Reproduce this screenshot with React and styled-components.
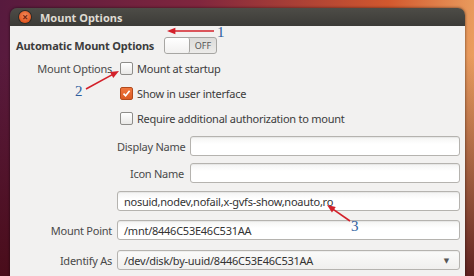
import React from "react";
import styled, { createGlobalStyle } from "styled-components";

const GlobalStyle = createGlobalStyle`
  html, body { margin: 0; padding: 0; }
  body {
    width: 474px;
    height: 276px;
    overflow: hidden;
    background:
      linear-gradient(180deg, rgba(70, 10, 20, 0) 20%, rgba(70, 10, 20, 0.85) 100%),
      linear-gradient(95deg, #571a3e 0%, #80263e 40%, #d2582e 78%, #efad6a 100%);
    font-family: "Noto Sans", "DejaVu Sans", sans-serif;
  }
`;

const Stage = styled.div`
  position: relative;
  width: 474px;
  height: 276px;
  padding: 8px 9px 0 10px;
  box-sizing: border-box;
`;

const Window = styled.div`
  width: 455px;
  height: 268px;
  border-radius: 7px 7px 0 0;
  overflow: hidden;
  box-shadow: 0 0 3px rgba(0, 0, 0, 0.6);
  display: flex;
  flex-direction: column;
`;

const TitleBar = styled.div`
  height: 18px;
  flex: none;
  display: flex;
  align-items: center;
  gap: 9px;
  padding-left: 9px;
  background: linear-gradient(180deg, #4d4c47 0%, #3c3b37 100%);
  color: #dfdbd2;
  font-size: 11px;
  font-weight: bold;
  white-space: nowrap;
`;

const CloseButton = styled.div`
  width: 12px;
  height: 12px;
  border-radius: 50%;
  background: radial-gradient(circle at 50% 40%, #f58d5f 0%, #e2561f 70%, #b9401a 100%);
  box-shadow: 0 0 0 1px #2d2a26;
  color: #6d2410;
  font-size: 10px;
  line-height: 12px;
  text-align: center;
`;

const Body = styled.div`
  flex: 1;
  background: #f2f1f0;
  padding: 11px 5px 0 6px;
  color: #3c3c3c;
  font-size: 11px;
  letter-spacing: -0.25px;
  white-space: nowrap;
`;

const Header = styled.div`
  display: flex;
  align-items: center;
  height: 16px;
`;

const HeaderLabel = styled.div`
  width: 148px;
  font-weight: bold;
  font-size: 11px;
  letter-spacing: -0.2px;
  color: #3c3c3c;
`;

const Toggle = styled.div`
  width: 51px;
  height: 15px;
  border: 1px solid #a7a6a3;
  border-radius: 3px;
  background: linear-gradient(180deg, #dcdbd9, #ecebe9);
  display: flex;
  align-items: center;
  overflow: hidden;
  letter-spacing: 0;
`;

const Knob = styled.div`
  width: 24px;
  height: 100%;
  background: linear-gradient(180deg, #ffffff, #f1f0ef);
  border-right: 1px solid #a7a6a3;
  border-radius: 2px;
`;

const ToggleText = styled.div`
  flex: 1;
  text-align: center;
  font-size: 9px;
  color: #555;
`;

const Form = styled.div`
  display: grid;
  grid-template-columns: 96px 1fr;
  column-gap: 5px;
  margin-top: 5px;
`;

const Label = styled.div`
  height: ${(p) => p.$h || 20}px;
  margin-top: ${(p) => p.$mt || 0}px;
  display: flex;
  align-items: center;
  justify-content: flex-end;
  color: #4a4a4a;
`;

const Cell = styled.div`
  height: ${(p) => p.$h || 20}px;
  margin-top: ${(p) => p.$mt || 0}px;
  display: flex;
  align-items: center;
  gap: ${(p) => p.$gap || 6}px;
`;

const CheckRow = styled(Cell)`
  padding-left: 3px;
  gap: 4px;
`;

const Box = styled.div`
  width: 11px;
  height: 11px;
  flex: none;
  border-radius: 2px;
  border: 1px solid ${(p) => (p.$on ? "#b24a1c" : "#8e8d8a")};
  background: ${(p) =>
    p.$on
      ? "linear-gradient(180deg, #f0773e, #dc5b24)"
      : "linear-gradient(180deg, #ffffff, #e9e8e6)"};
  display: flex;
  align-items: center;
  justify-content: center;
`;

const SubLabel = styled.div`
  width: 67px;
  flex: none;
  text-align: right;
  color: #4a4a4a;
`;

const Field = styled.div`
  flex: 1;
  height: 100%;
  box-sizing: border-box;
  border: 1px solid #b5b3af;
  border-radius: 3px;
  background: linear-gradient(180deg, #f4f4f3 0%, #ffffff 40%);
  box-shadow: inset 0 1px 1px rgba(0, 0, 0, 0.06);
  display: flex;
  align-items: center;
  padding: 0 6px;
  color: #333;
`;

const Combo = styled(Field)`
  justify-content: space-between;
  padding-right: 10px;
  background: linear-gradient(180deg, #fbfbfa, #f0efee);
`;

const Caret = styled.span`
  font-size: 7px;
  color: #555;
`;

const Overlay = styled.svg`
  position: absolute;
  left: 0;
  top: 0;
  pointer-events: none;
`;

const Num = styled.text`
  font-family: "Liberation Serif", serif;
  font-size: 15px;
  fill: #2e5e9e;
`;

const Check = () => (
  <svg width="9" height="9" viewBox="0 0 9 9">
    <path d="M1.5 4.6 L3.6 6.8 L7.6 1.8" fill="none" stroke="#fff" strokeWidth="1.6" />
  </svg>
);

const Arrow = ({ x1, y1, x2, y2 }) => {
  const a = Math.atan2(y2 - y1, x2 - x1);
  const l = 9;
  const w = 0.38;
  const p1 = [x2 - l * Math.cos(a - w), y2 - l * Math.sin(a - w)];
  const p2 = [x2 - l * Math.cos(a + w), y2 - l * Math.sin(a + w)];
  return (
    <g>
      <line x1={x1} y1={y1} x2={x2 - 5 * Math.cos(a)} y2={y2 - 5 * Math.sin(a)} stroke="#d3202a" strokeWidth="1.6" />
      <polygon points={`${x2},${y2} ${p1[0]},${p1[1]} ${p2[0]},${p2[1]}`} fill="#d3202a" />
    </g>
  );
};

export default function App() {
  return (
    <Stage>
      <GlobalStyle />
      <Window>
        <TitleBar>
          <CloseButton>×</CloseButton>
          <span>Mount Options</span>
        </TitleBar>
        <Body>
          <Header>
            <HeaderLabel>Automatic Mount Options</HeaderLabel>
            <Toggle>
              <Knob />
              <ToggleText>OFF</ToggleText>
            </Toggle>
          </Header>
          <Form>
            <Label>Mount Options</Label>
            <CheckRow>
              <Box />
              <span>Mount at startup</span>
            </CheckRow>

            <div />
            <CheckRow $mt={5}>
              <Box $on>
                <Check />
              </Box>
              <span>Show in user interface</span>
            </CheckRow>

            <div />
            <CheckRow $mt={5}>
              <Box />
              <span>Require additional authorization to mount</span>
            </CheckRow>

            <div />
            <Cell $mt={8}>
              <SubLabel>Display Name</SubLabel>
              <Field />
            </Cell>

            <div />
            <Cell $mt={7}>
              <SubLabel>Icon Name</SubLabel>
              <Field />
            </Cell>

            <div />
            <Cell $mt={8}>
              <Field>nosuid,nodev,nofail,x-gvfs-show,noauto,ro</Field>
            </Cell>

            <Label $mt={9}>Mount Point</Label>
            <Cell $mt={9}>
              <Field>/mnt/8446C53E46C531AA</Field>
            </Cell>

            <Label $mt={10}>Identify As</Label>
            <Cell $mt={10}>
              <Combo>
                <span>/dev/disk/by-uuid/8446C53E46C531AA</span>
                <Caret>▼</Caret>
              </Combo>
            </Cell>
          </Form>
        </Body>
      </Window>
      <Overlay width="474" height="276">
        <Arrow x1={214} y1={31} x2={167} y2={31} />
        <Num x={217} y={37}>1</Num>
        <Arrow x1={86} y1={89} x2={119} y2={71} />
        <Num x={75} y={96}>2</Num>
        <Arrow x1={350} y1={221} x2={327} y2={205} />
        <Num x={351} y={231}>3</Num>
      </Overlay>
    </Stage>
  );
}
